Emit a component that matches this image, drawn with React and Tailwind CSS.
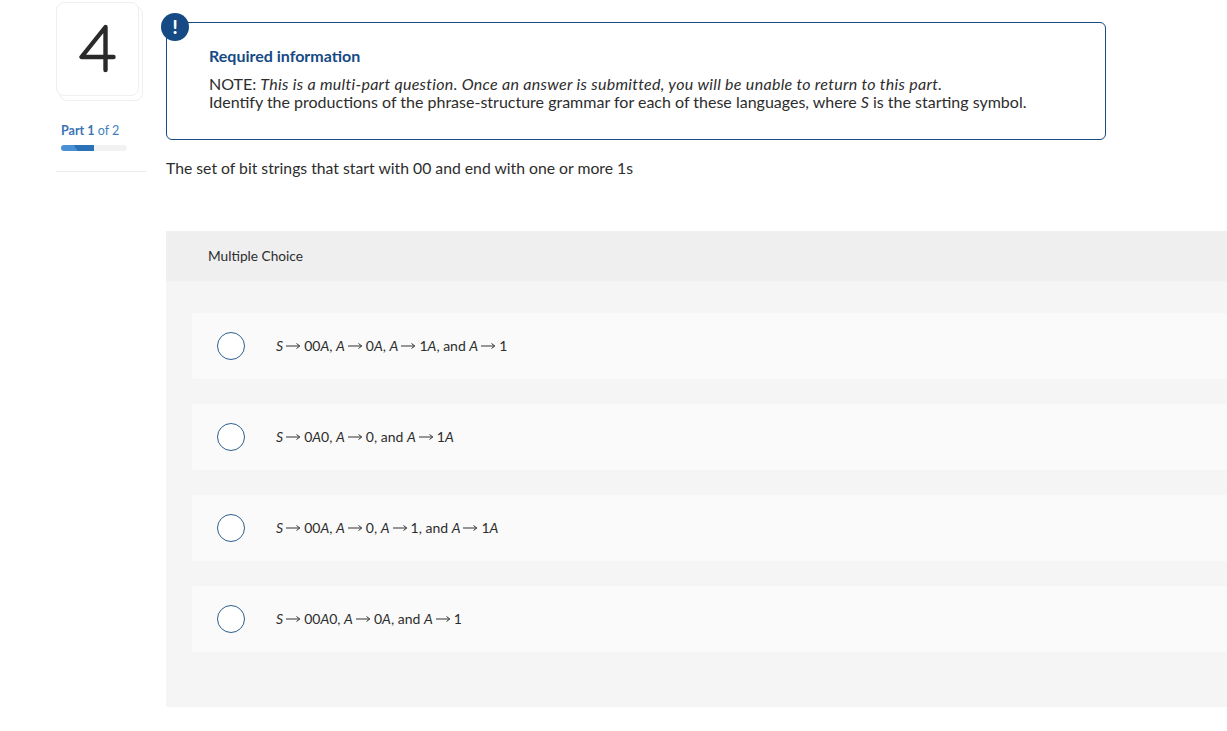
import React from "react";

const Arrow = () => (
  <svg width="15" height="8" viewBox="0 0 15 8" className="inline-block ml-[3px] mr-[3px] align-[1px]" fill="none" stroke="#333" strokeWidth="1">
    <path d="M0 4h13.5M10.5 1.5 13.8 4l-3.3 2.5" />
  </svg>
);

const V = ({ children }) => <i>{children}</i>;

const options = [
  <>
    <V>S</V><Arrow />00<V>A</V>, <V>A</V><Arrow />0<V>A</V>, <V>A</V><Arrow />1<V>A</V>, and <V>A</V><Arrow />1
  </>,
  <>
    <V>S</V><Arrow />0<V>A</V>0, <V>A</V><Arrow />0, and <V>A</V><Arrow />1<V>A</V>
  </>,
  <>
    <V>S</V><Arrow />00<V>A</V>, <V>A</V><Arrow />0, <V>A</V><Arrow />1, and <V>A</V><Arrow />1<V>A</V>
  </>,
  <>
    <V>S</V><Arrow />00<V>A</V>0, <V>A</V><Arrow />0<V>A</V>, and <V>A</V><Arrow />1
  </>,
];

export default function App() {
  return (
    <div className="h-[731px] w-[1227px] overflow-hidden bg-white flex pl-[56px] text-[#2d2d2d] font-['Lato','Open_Sans',sans-serif]">
      <aside className="w-[90px] shrink-0 pt-[2px]">
        <div className="relative w-[87px] h-[99px]">
          <div className="absolute left-[3px] top-[4px] w-[84px] h-[95px] rounded-[8px] border border-[#efefef] bg-white" />
          <div className="absolute left-0 top-0 w-[83px] h-[94px] rounded-[8px] border border-[#efefef] bg-white flex items-center justify-center">
            <svg width="38" height="50" viewBox="0 0 38 50" fill="none" stroke="#2a2a2a" strokeWidth="4.4" strokeLinecap="round" strokeLinejoin="round">
              <path d="M26.5 46V3L2.5 33h32" />
            </svg>
          </div>
        </div>
        <div className="mt-[22px] pl-[5px] text-[12.5px] leading-[16px] text-[#3f7fc4]">
          <span className="font-bold text-[#3b73b5]">Part 1</span> of 2
        </div>
        <div className="ml-[5px] mt-[6px] w-[66px] h-[6px] rounded-full bg-[#f2f2f2] overflow-hidden">
          <div className="w-[33px] h-full bg-[linear-gradient(60deg,#4a90d6_45%,#2a72b5_45%)]" />
        </div>
        <div className="mt-[20px] h-px bg-[#ececec]" />
      </aside>

      <main className="ml-[20px] flex-1 min-w-0 pt-[22px]">
        <div className="relative w-[940px] h-[118px] rounded-[6px] border border-[#164a85] pl-[42px] pt-[24px]">
          <div className="absolute left-[-6px] top-[-10px] w-[28px] h-[28px] rounded-full bg-[#164a85] flex items-center justify-center text-white font-black text-[18px] leading-none">
            !
          </div>
          <div className="text-[16px] leading-[18px] font-bold text-[#164a85]">Required information</div>
          <div className="mt-[10px] text-[16px] leading-[18px] whitespace-nowrap">
            NOTE: <i className="tracking-[0.3px]">This is a multi-part question. Once an answer is submitted, you will be unable to return to this part.</i>
            <br />
            Identify the productions of the phrase-structure grammar for each of these languages, where <i>S</i> is the starting symbol.
          </div>
        </div>

        <p className="mt-[19px] text-[15.75px] leading-[18px]">
          The set of bit strings that start with 00 and end with one or more 1s
        </p>

        <section className="mt-[54px] w-[1061px] h-[476px] bg-[#f5f5f5] rounded-tl-[3px]">
          <div className="h-[50px] bg-[#efefef] pl-[42px] flex items-center text-[13.7px]">Multiple Choice</div>
          <div className="pl-[26px] pt-[32px] flex flex-col gap-[25px]">
            {options.map((o, i) => (
              <div key={i} className="h-[66px] bg-[#fafafa] rounded-l-[3px] flex items-center pl-[25px]">
                <span className="w-[28px] h-[28px] rounded-full border border-[#2d5f8f] bg-white shrink-0" />
                <span className="ml-[31px] pb-[2px] text-[14px] whitespace-nowrap">{o}</span>
              </div>
            ))}
          </div>
        </section>
      </main>
    </div>
  );
}
